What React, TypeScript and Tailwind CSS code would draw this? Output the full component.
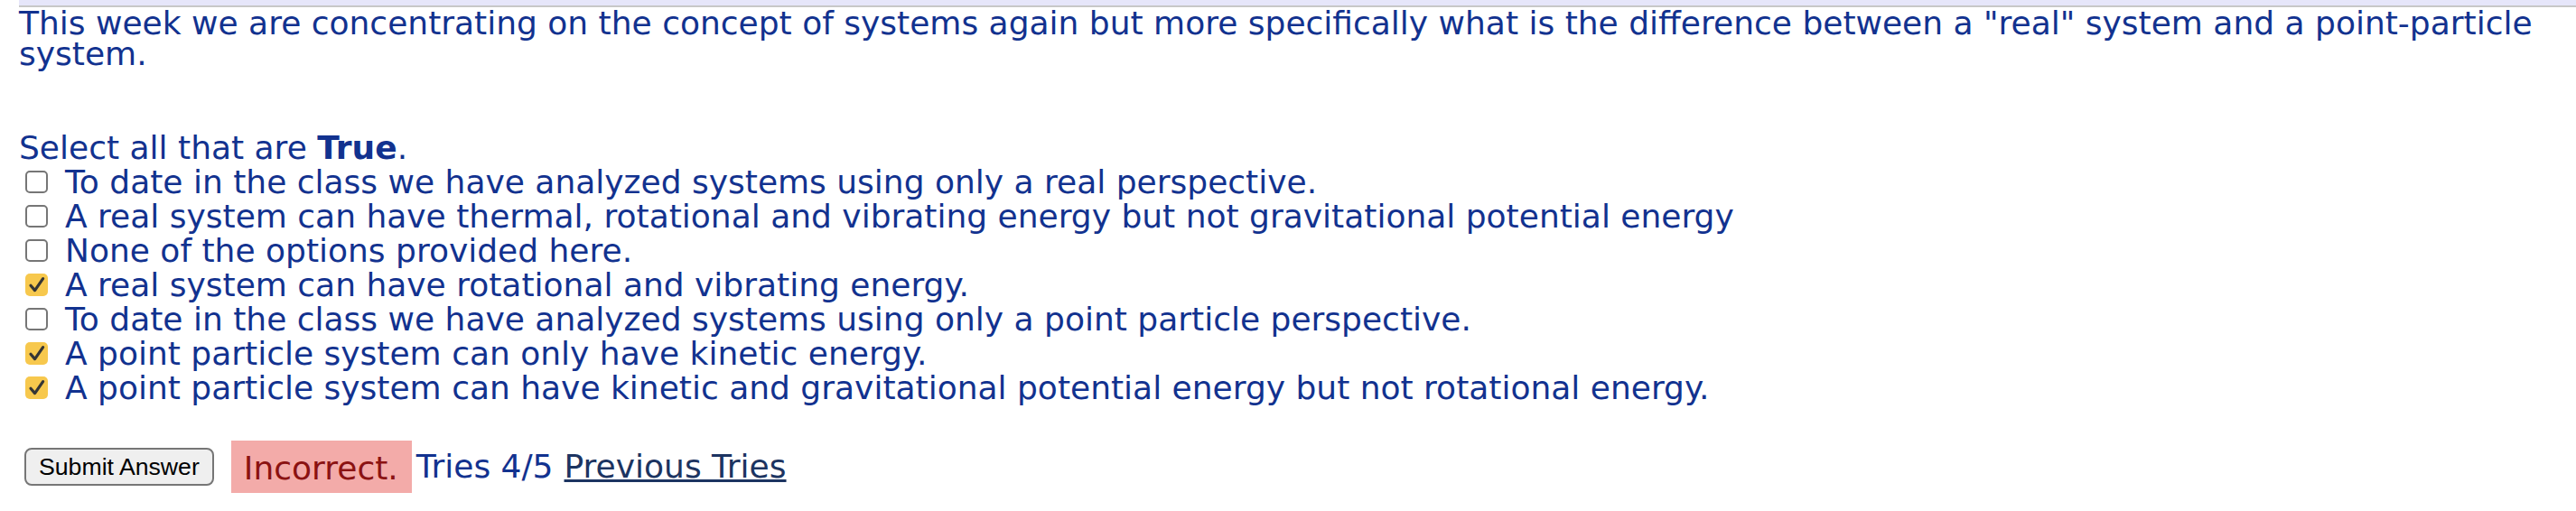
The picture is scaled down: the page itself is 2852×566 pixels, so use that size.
type Option = {
  label: string;
  checked: boolean;
};

const OPTIONS: Option[] = [
  { label: "To date in the class we have analyzed systems using only a real perspective.", checked: false },
  {
    label:
      "A real system can have thermal, rotational and vibrating energy but not gravitational potential energy",
    checked: false,
  },
  { label: "None of the options provided here.", checked: false },
  { label: "A real system can have rotational and vibrating energy.", checked: true },
  {
    label: "To date in the class we have analyzed systems using only a point particle perspective.",
    checked: false,
  },
  { label: "A point particle system can only have kinetic energy.", checked: true },
  {
    label:
      "A point particle system can have kinetic and gravitational potential energy but not rotational energy.",
    checked: true,
  },
];

const TEXT_FONT = "font-['DejaVu_Sans',Verdana,sans-serif]";

function Checkbox({ checked }: { checked: boolean }) {
  if (checked) {
    return (
      <span className="relative inline-block h-[25px] w-[25px] ml-[7px] mr-[19px] align-baseline rounded-[5px] bg-[#f7c84d]">
        <svg
          viewBox="0 0 25 25"
          className="absolute inset-0 h-[25px] w-[25px]"
          fill="none"
          stroke="#353535"
          strokeWidth="3.2"
          strokeLinecap="round"
          strokeLinejoin="round"
        >
          <path d="M6 13.2 L10.6 18.6 L19.6 5.6" />
        </svg>
      </span>
    );
  }
  return (
    <span className="inline-block h-[25px] w-[25px] ml-[7px] mr-[19px] align-baseline rounded-[5px] border-2 border-[#767676] bg-white" />
  );
}

export default function App() {
  return (
    <div className={`min-h-[566px] bg-white pl-[21px] text-[36px] text-[#12328f] ${TEXT_FONT}`}>
      {/* Header strip */}
      <div className="h-[8px] bg-[#e6e6fa] border-b-2 border-[#c8c8c8]" />

      {/* Question */}
      <p className="mt-[1px] leading-[34px]">
        This week we are concentrating on the concept of systems again but more specifically what is
        the difference between a "real" system and a point-particle system.
      </p>

      <div className="mt-[70px] leading-[34px]">
        Select all that are <b>True</b>.
      </div>

      <div className="mt-[2px]">
        {OPTIONS.map((o) => (
          <div key={o.label} className="leading-[38px] whitespace-nowrap">
            <Checkbox checked={o.checked} />
            {o.label}
          </div>
        ))}
      </div>

      {/* Submit row */}
      <div className="mt-[39px] flex items-center">
        <button className="ml-[6px] h-[42px] rounded-[8px] border-2 border-[#767676] bg-[#efefef] px-[14px] text-[26.67px] leading-none text-black font-['Liberation_Sans',Arial,sans-serif]">
          Submit Answer
        </button>
        <span className="ml-[19px] bg-[#f3aba9] pl-[14px] pr-[15px] pt-[14px] pb-[10px] leading-[34px] text-[#8b1212]">
          Incorrect.
        </span>
        <span className="ml-[5px] leading-[34px]">Tries 4/5</span>
        <a
          href="#"
          className="ml-[12px] leading-[34px] text-[#1c3461] underline decoration-[3px] underline-offset-[2px]"
        >
          Previous Tries
        </a>
      </div>
    </div>
  );
}
